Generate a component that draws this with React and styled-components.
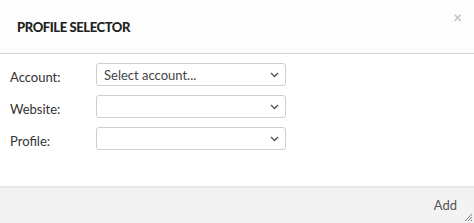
import React from "react";
import styled, { createGlobalStyle } from "styled-components";

const GlobalStyle = createGlobalStyle`
  html, body {
    margin: 0;
    padding: 0;
    background: #ffffff;
  }
  body {
    font-family: Lato, "Liberation Sans", sans-serif;
    color: #333;
  }
`;

const Dialog = styled.div`
  width: 474px;
  height: 223px;
  display: flex;
  flex-direction: column;
  background: #fff;
  overflow: hidden;
`;

const Header = styled.div`
  height: 54px;
  box-sizing: border-box;
  display: flex;
  align-items: center;
  justify-content: space-between;
  padding: 0 12px 0 17px;
  background: #fdfdfd;
  border-bottom: 1px solid #d4d4d4;
`;

const Title = styled.h2`
  margin: 0;
  font-size: 13px;
  font-weight: 900;
  color: #222;
  letter-spacing: -0.4px;
  padding-top: 1px;
`;

const Close = styled.span`
  font-size: 15px;
  color: #c4c4c4;
  font-weight: 700;
  margin-top: -18px;
  line-height: 1;
`;

const Body = styled.div`
  flex: 1;
  display: flex;
  flex-direction: column;
  gap: 9px;
  padding: 9px 0 0 10px;
`;

const Row = styled.div`
  display: flex;
  align-items: center;
`;

const Label = styled.label`
  width: 86px;
  font-size: 13px;
  color: #333;
  padding-top: 5px;
`;

const Select = styled.div`
  width: 190px;
  height: 23px;
  box-sizing: border-box;
  border: 1px solid #cfcfcf;
  border-radius: 3px;
  display: flex;
  align-items: center;
  justify-content: space-between;
  padding: 0 6px 0 7px;
  font-size: 13px;
  color: #444;
  background: #fff;
`;

const Footer = styled.div`
  height: 37px;
  box-sizing: border-box;
  background: #f3f3f3;
  border-top: 2px solid #e8e8e8;
  display: flex;
  align-items: center;
  justify-content: flex-end;
  padding: 0 17px 0 0;
  position: relative;
`;

const AddButton = styled.button`
  background: none;
  border: none;
  padding: 0;
  font-family: inherit;
  font-size: 13px;
  color: #555;
  margin-top: -2px;
`;

const Grip = styled.svg`
  position: absolute;
  right: 1px;
  bottom: 1px;
`;

const Chevron = () => (
  <svg width="9" height="6" viewBox="0 0 9 6">
    <path d="M1 1l3.5 3.5L8 1" fill="none" stroke="#555" strokeWidth="1.3" />
  </svg>
);

const fields = [
  { label: "Account:", value: "Select account..." },
  { label: "Website:", value: "" },
  { label: "Profile:", value: "" },
];

export default function App() {
  return (
    <>
      <GlobalStyle />
      <Dialog>
        <Header>
          <Title>PROFILE SELECTOR</Title>
          <Close>×</Close>
        </Header>
        <Body>
          {fields.map((f) => (
            <Row key={f.label}>
              <Label>{f.label}</Label>
              <Select>
                <span>{f.value}</span>
                <Chevron />
              </Select>
            </Row>
          ))}
        </Body>
        <Footer>
          <AddButton>Add</AddButton>
          <Grip width="10" height="10" viewBox="0 0 10 10">
            <path d="M9 2L2 9M9 5L5 9M9 8L8 9" stroke="#777" strokeWidth="1" />
          </Grip>
        </Footer>
      </Dialog>
    </>
  );
}
